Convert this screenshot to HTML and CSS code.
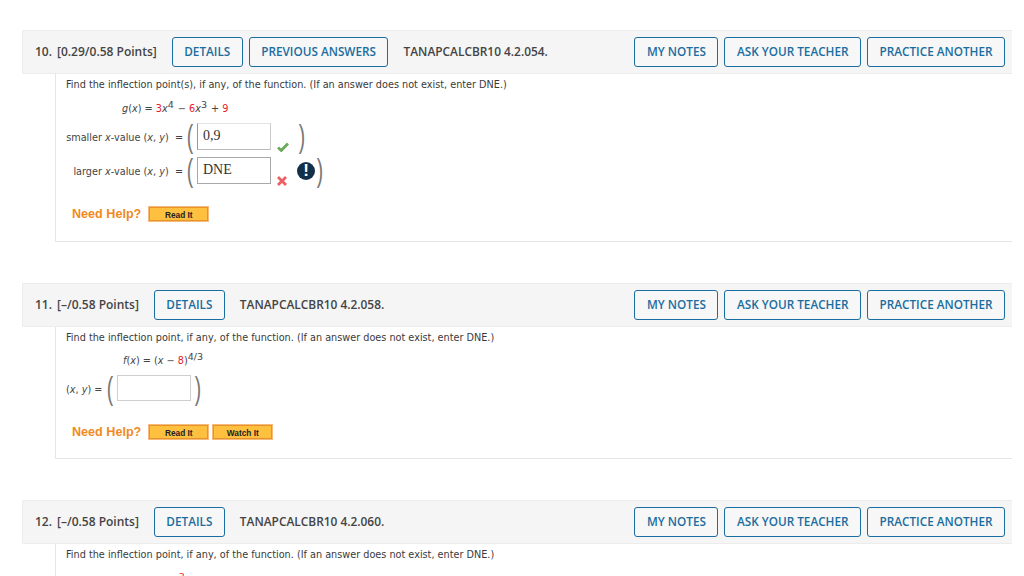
FILE: index.html
```
<!DOCTYPE html>
<html lang="en">
<head>
<meta charset="utf-8">
<title>Questions</title>
<link rel="stylesheet" href="styles.css">
</head>
<body>
<section class="question">
  <header class="qhead">
    <span class="qnum">10.</span><span class="qpoints">[0.29/0.58 Points]</span>
    <button class="btn">DETAILS</button>
    <button class="btn">PREVIOUS ANSWERS</button>
    <span class="qcode">TANAPCALCBR10 4.2.054.</span>
    <div class="actions">
      <button class="btn">MY NOTES</button>
      <button class="btn">ASK YOUR TEACHER</button>
      <button class="btn">PRACTICE ANOTHER</button>
    </div>
  </header>
  <div class="qbody">
    <p class="prompt">Find the inflection point(s), if any, of the function. (If an answer does not exist, enter DNE.)</p>
    <p class="eq eq-g"><i>g</i>(<i>x</i>) = <span class="red">3</span><i>x</i><sup>4</sup> &minus; <span class="red">6</span><i>x</i><sup>3</sup> + <span class="red">9</span></p>
    <div class="answers">
      <div class="row">
        <span class="label">smaller <i>x</i>-value (<i>x</i>, <i>y</i>) &nbsp;=</span>
        <span class="paren">(</span>
        <span class="field field-ok">0,9</span>
        <svg class="mark" viewBox="0 0 12 10" width="12" height="10"><path d="M1 5.5 L4.3 8.5 L11 1.5" fill="none" stroke="#6aaa5a" stroke-width="2.8"/></svg>
        <span class="paren paren-far">)</span>
      </div>
      <div class="row">
        <span class="label">larger <i>x</i>-value (<i>x</i>, <i>y</i>) &nbsp;=</span>
        <span class="paren">(</span>
        <span class="field field-bad">DNE</span>
        <svg class="mark" viewBox="0 0 10 10" width="10" height="10"><path d="M1 1 L9 9 M9 1 L1 9" fill="none" stroke="#ee5f63" stroke-width="2.8"/></svg>
        <span class="alert">!</span>
        <span class="paren paren-end">)</span>
      </div>
    </div>
    <div class="help">
      <span class="need">Need Help?</span>
      <button class="orange">Read It</button>
    </div>
  </div>
</section>

<section class="question">
  <header class="qhead">
    <span class="qnum">11.</span><span class="qpoints">[&ndash;/0.58 Points]</span>
    <button class="btn">DETAILS</button>
    <span class="qcode">TANAPCALCBR10 4.2.058.</span>
    <div class="actions">
      <button class="btn">MY NOTES</button>
      <button class="btn">ASK YOUR TEACHER</button>
      <button class="btn">PRACTICE ANOTHER</button>
    </div>
  </header>
  <div class="qbody">
    <p class="prompt">Find the inflection point, if any, of the function. (If an answer does not exist, enter DNE.)</p>
    <p class="eq eq-f"><i>f</i>(<i>x</i>) = (<i>x</i> &minus; <span class="red">8</span>)<sup>4/3</sup></p>
    <div class="answers">
      <div class="row row-plain">
        <span class="label-short">(<i>x</i>, <i>y</i>) =</span>
        <span class="paren">(</span>
        <span class="field field-empty"></span>
        <span class="paren paren-close">)</span>
      </div>
    </div>
    <div class="help help-2">
      <span class="need">Need Help?</span>
      <button class="orange">Read It</button>
      <button class="orange">Watch It</button>
    </div>
  </div>
</section>

<section class="question">
  <header class="qhead">
    <span class="qnum">12.</span><span class="qpoints">[&ndash;/0.58 Points]</span>
    <button class="btn">DETAILS</button>
    <span class="qcode">TANAPCALCBR10 4.2.060.</span>
    <div class="actions">
      <button class="btn">MY NOTES</button>
      <button class="btn">ASK YOUR TEACHER</button>
      <button class="btn">PRACTICE ANOTHER</button>
    </div>
  </header>
  <div class="qbody">
    <p class="prompt">Find the inflection point, if any, of the function. (If an answer does not exist, enter DNE.)</p>
    <p class="eq eq-h"><i>f</i>(<i>x</i>) = <i>x</i><sup class="red">3</sup></p>
  </div>
</section>
</body>
</html>
```
FILE: styles.css
```
html, body { margin: 0; padding: 0; height: 576px; overflow: hidden; background: #fff; }
body { padding: 30px 12px 0 22px; width: 990px; box-sizing: content-box; font-family: "DejaVu Sans", sans-serif; color: #444; }
.question { margin-bottom: 41px; }
.qhead { display: flex; align-items: center; height: 44px; box-sizing: border-box; padding: 0 7px 0 12px; background: #f5f5f5; border: 1px solid #ececec; border-right: 0; border-radius: 2px 0 0 2px; font-family: "Open Sans", sans-serif; font-size: 12px; font-weight: 600; color: #444; }
.qnum { margin: 0 5px 2px 0; }
.qpoints { margin: 0 15px 2px 0; }
.btn { height: 30px; padding: 0 11.5px 2px; margin: 0 6px 0 0; background: #f7f7f7; border: 1px solid #1a6d9f; border-radius: 3px; font-family: "Open Sans", sans-serif; font-size: 11.75px; font-weight: 600; color: #1a6d9f; white-space: nowrap; }
.qcode { margin: 0 0 2px 9px; font-size: 11.9px; }
.actions { margin-left: auto; display: flex; gap: 6px; }
.actions .btn { margin: 0; }
.qbody { margin-left: 33px; padding: 4px 0 19px 10px; background: #fff; border-left: 1px solid #e6e6e6; border-bottom: 1px solid #e6e6e6; }
.prompt { margin: 0; font-size: 9.7px; line-height: 14px; color: #3a3a3a; }
.eq { margin: 10px 0 0; font-size: 9.7px; line-height: 14px; color: #444; }
.eq sup { font-size: 9.5px; line-height: 0; margin-right: 1px; }
.eq-g { padding-left: 56px; }
.eq-f { padding-left: 57px; margin-top: 9px; }
.eq-h { padding-left: 76px; margin-top: 12px; }
.red { color: #e8202a; }
.answers { margin-top: 7px; display: flex; flex-direction: column; gap: 7px; }
.row { display: flex; align-items: center; height: 27px; font-size: 9.7px; }
.row-plain { height: 26px; }
.label { width: 117px; padding-top: 2px; text-align: right; white-space: nowrap; flex: none; }
.label-short { width: 37px; padding-top: 2px; white-space: nowrap; flex: none; }
.paren { width: 14px; flex: none; text-align: center; font-family: "Liberation Sans", sans-serif; font-weight: 400; font-size: 32px; line-height: 27px; color: #777; transform: scaleX(0.6); }
.paren-far { margin-left: 6px; }
.paren-end { width: 9px; }
.field { width: 74px; height: 27px; box-sizing: border-box; flex: none; padding: 0 5px; background: #fff; font-family: "Liberation Serif", serif; font-size: 14px; line-height: 23px; color: #333; }
.field-ok { border: 1px solid #e4e4e4; border-left-color: #999; border-bottom-color: #bbb; border-right-color: #ccc; }
.field-bad { border: 1px solid #a8a8a8; }
.field-empty { height: 26px; border: 1px solid #cfcfcf; }
.mark { margin: 20px 0 0 6px; flex: none; }
.alert { width: 18px; height: 18px; margin-left: 10px; flex: none; border-radius: 50%; background: #13304a; color: #fff; text-align: center; font-family: "Liberation Sans", sans-serif; font-weight: 700; font-size: 17px; line-height: 18px; }
.help { display: flex; align-items: center; margin: 22px 0 0 6px; height: 16px; }
.help-2 { margin-top: 23px; margin-bottom: -1px; }
.need { font-family: "Liberation Sans", sans-serif; font-weight: 700; font-size: 12.6px; color: #f08a1d; margin-right: 7px; }
.orange { width: 61px; height: 16px; padding: 1px 0 0; margin-right: 3px; background: #ffc040; border: 1px solid #f6bb7c; box-shadow: inset 0 0 0 1px #e8922c; font-family: "Liberation Sans", sans-serif; font-weight: 700; font-size: 8.3px; line-height: 12px; color: #222; }
```
